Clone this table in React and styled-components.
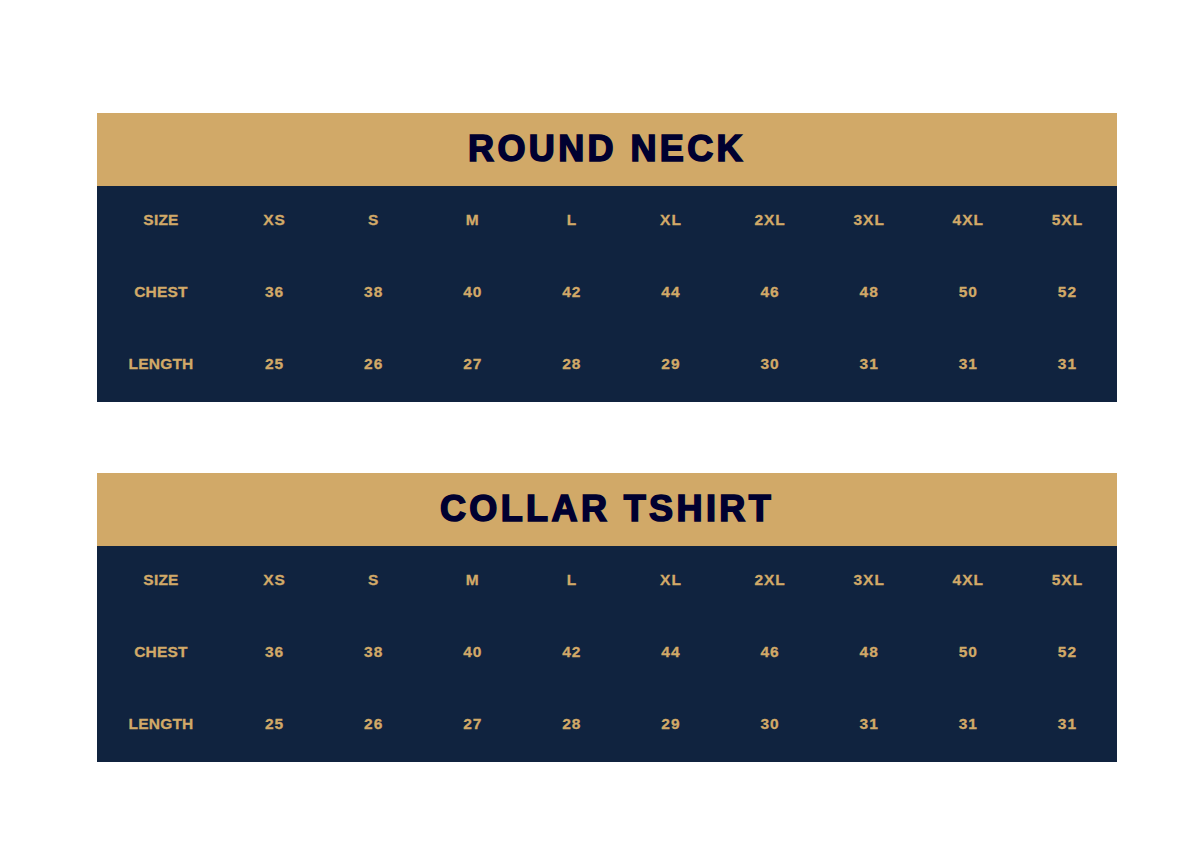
import React from 'react';
import styled, { createGlobalStyle } from 'styled-components';

const GlobalStyle = createGlobalStyle`
  html, body {
    margin: 0;
    padding: 0;
    background: #ffffff;
  }
`;

const Page = styled.div`
  width: 1200px;
  height: 849px;
  box-sizing: border-box;
  padding: 113px 83px 0 97px;
  display: flex;
  flex-direction: column;
  gap: 71px;
`;

const Chart = styled.section`
  width: 1020px;
  display: flex;
  flex-direction: column;
`;

const Title = styled.h2`
  margin: 0;
  height: 73px;
  background: #d1a968;
  display: flex;
  align-items: center;
  justify-content: center;
  font-family: "Liberation Sans", Arial, sans-serif;
  font-weight: 700;
  font-size: 36px;
  letter-spacing: 3.4px;
  color: #000030;
  -webkit-text-stroke: 1.6px #000030;
  padding-bottom: 2px;
  box-sizing: border-box;
`;

const Body = styled.div`
  background: #10233f;
  display: grid;
  grid-template-columns: 128px repeat(9, 1fr);
  grid-auto-rows: 72px;
`;

const Cell = styled.div`
  display: flex;
  align-items: center;
  justify-content: center;
  padding-bottom: 4px;
  font-family: "Liberation Sans", Arial, sans-serif;
  font-weight: 700;
  font-size: 15.5px;
  letter-spacing: ${p => (p.$label ? '0.2px' : '1px')};
  color: #d1a968;
  -webkit-text-stroke: 0.3px #d1a968;
`;

const rows = [
  ['SIZE', 'XS', 'S', 'M', 'L', 'XL', '2XL', '3XL', '4XL', '5XL'],
  ['CHEST', '36', '38', '40', '42', '44', '46', '48', '50', '52'],
  ['LENGTH', '25', '26', '27', '28', '29', '30', '31', '31', '31'],
];

const SizeChart = ({ title }) => (
  <Chart>
    <Title>{title}</Title>
    <Body>
      {rows.map((row, r) =>
        row.map((value, c) => (
          <Cell key={`${r}-${c}`} $label={c === 0}>
            {value}
          </Cell>
        ))
      )}
    </Body>
  </Chart>
);

const App = () => (
  <>
    <GlobalStyle />
    <Page>
      <SizeChart title="ROUND NECK" />
      <SizeChart title="COLLAR TSHIRT" />
    </Page>
  </>
);

export default App;
